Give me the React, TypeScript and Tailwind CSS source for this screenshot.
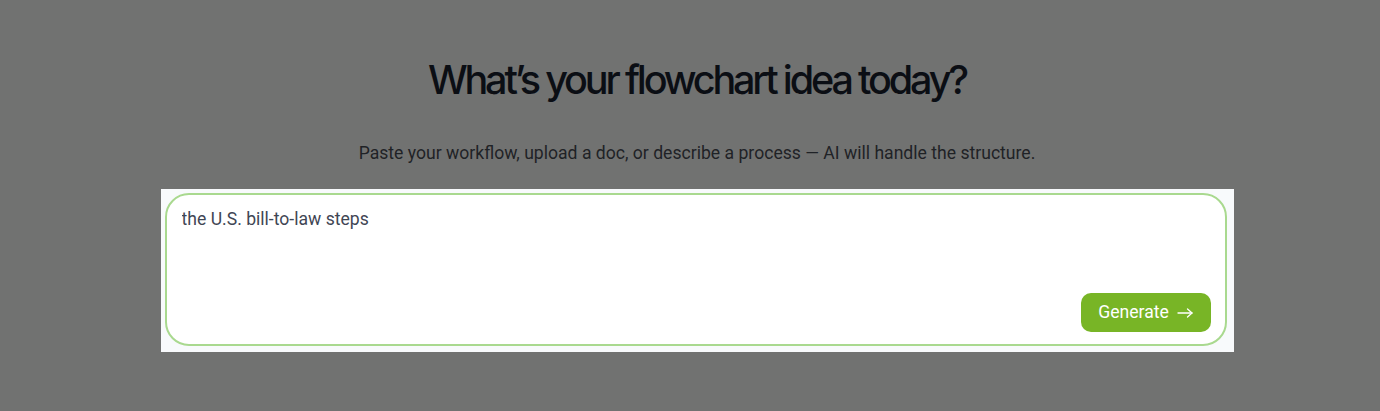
import { useState } from 'react';

const App = () => {
  const [prompt, setPrompt] = useState('the U.S. bill-to-law steps');

  return (
    <div className="flex h-[411px] w-full flex-col items-center bg-[#717271] pl-[14px] font-['Inter','Roboto',sans-serif]">
      <h1 className="mt-[56px] text-[39.6px] font-medium leading-[48px] tracking-[-0.08em] text-[#0b0e14]">
        What’s your flowchart idea today?
      </h1>
      <p className="mt-[36px] font-['Roboto',sans-serif] text-[17.6px] leading-[26px] text-[#1f2226]">
        Paste your workflow, upload a doc, or describe a process — AI will handle the structure.
      </p>

      <div className="mt-[23px] w-[1073px] bg-[#f8fafc] pb-[6px] pl-[4px] pr-[7px] pt-[4px]">
        <div className="flex h-[153px] flex-col rounded-[24px] border-2 border-[#a9d98f] bg-white pb-[12px] pl-[15px] pr-[14px] pt-[11px]">
          <textarea
            value={prompt}
            onChange={(e) => setPrompt(e.target.value)}
            className="w-full flex-1 resize-none bg-transparent font-['Roboto',sans-serif] text-[17.6px] leading-[26px] text-[#3f4654] caret-[#1f2937] outline-none"
            autoFocus
          />
          <div className="flex justify-end">
            <button className="flex h-[39px] w-[130px] items-center justify-center gap-[8px] rounded-[10px] bg-[#78b526] font-['Roboto',sans-serif] text-[17.6px] text-white">
              Generate
              <svg width="16" height="12" viewBox="0 0 16 12" fill="none" stroke="currentColor" strokeWidth="1.3" strokeLinecap="round" strokeLinejoin="round">
                <path d="M1 6h14" />
                <path d="M10.5 2 15 6l-4.5 4" />
              </svg>
            </button>
          </div>
        </div>
      </div>
    </div>
  );
};

export default App;
